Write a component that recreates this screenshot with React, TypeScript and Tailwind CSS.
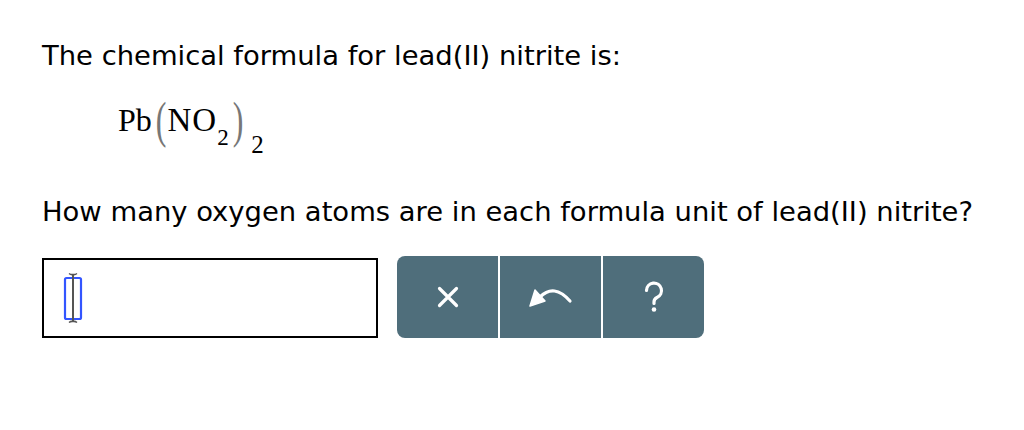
import React from "react";

function CursorMark() {
  // blue placeholder box with an I-beam through it
  return (
    <svg width="24" height="54" viewBox="0 0 24 54" className="block">
      <rect x="3" y="7" width="16" height="41" rx="1.5" fill="none" stroke="#3355ff" strokeWidth="2.2" />
      <line x1="11" y1="3" x2="11" y2="51" stroke="#555" strokeWidth="2" />
      <path d="M7 2.5 Q9 4 11 3.5 Q13 4 15 2.5" fill="none" stroke="#555" strokeWidth="1.5" />
      <path d="M7 51.5 Q9 50 11 50.5 Q13 50 15 51.5" fill="none" stroke="#555" strokeWidth="1.5" />
    </svg>
  );
}

function XIcon() {
  return (
    <svg width="24" height="24" viewBox="0 0 24 24">
      <path d="M3.5 3.5 L20.5 20.5 M20.5 3.5 L3.5 20.5" stroke="white" strokeWidth="3.2" strokeLinecap="round" />
    </svg>
  );
}

function UndoIcon() {
  return (
    <svg width="46" height="24" viewBox="0 0 46 24">
      <path d="M12 12 Q26 -2 42 16" fill="none" stroke="white" strokeWidth="3.2" strokeLinecap="round" />
      <path d="M2 21 L7 5 L17 16 Z" fill="white" stroke="white" strokeWidth="1.5" strokeLinejoin="round" />
    </svg>
  );
}

function HelpIcon() {
  return (
    <svg width="24" height="32" viewBox="0 0 24 32">
      <path d="M4.5 9.5 A7.5 7.5 0 1 1 15 16.5 Q12 18 12 21 V22.5" fill="none" stroke="white" strokeWidth="3.2" strokeLinecap="round" />
      <circle cx="12" cy="28.5" r="2.3" fill="white" />
    </svg>
  );
}

export default function App() {
  return (
    <div className="h-[430px] w-[1024px] bg-white pl-[42px] pt-[40px] text-black" style={{ fontFamily: '"DejaVu Sans", Verdana, sans-serif' }}>
      <p className="text-[27.4px] leading-[32px]">The chemical formula for lead(II) nitrite is:</p>

      {/* formula */}
      <div className="mt-[30px] ml-[76px] flex h-[36px] items-baseline text-[32px] leading-[36px]" style={{ fontFamily: '"Liberation Serif", "Times New Roman", serif' }}>
        <span>Pb</span>
        <span className="ml-[4px] mr-[1px] inline-block scale-y-[1.55] text-[#777]">(</span>
        <span className="text-[33px] tracking-[1px]">NO</span>
        <span className="relative top-[14px] text-[23px]">2</span>
        <span className="ml-[4px] inline-block scale-y-[1.55] text-[#777]">)</span>
        <span className="relative top-[22px] ml-[8px] text-[25px]">2</span>
      </div>

      <p className="mt-[58px] text-[27.4px] leading-[32px]">How many oxygen atoms are in each formula unit of lead(II) nitrite?</p>

      <div className="mt-[30px] flex items-start gap-[19px]">
        <div className="flex h-[80px] w-[336px] items-center border-2 border-black pl-[18px]">
          <CursorMark />
        </div>
        <div className="-mt-[2px] flex h-[82px] w-[307px] overflow-hidden rounded-[8px] bg-[#4f6e7b]">
          <div className="flex flex-1 items-center justify-center">
            <XIcon />
          </div>
          <div className="w-[2px] bg-white" />
          <div className="flex flex-1 items-center justify-center">
            <UndoIcon />
          </div>
          <div className="w-[2px] bg-white" />
          <div className="flex flex-1 items-center justify-center">
            <HelpIcon />
          </div>
        </div>
      </div>
    </div>
  );
}
